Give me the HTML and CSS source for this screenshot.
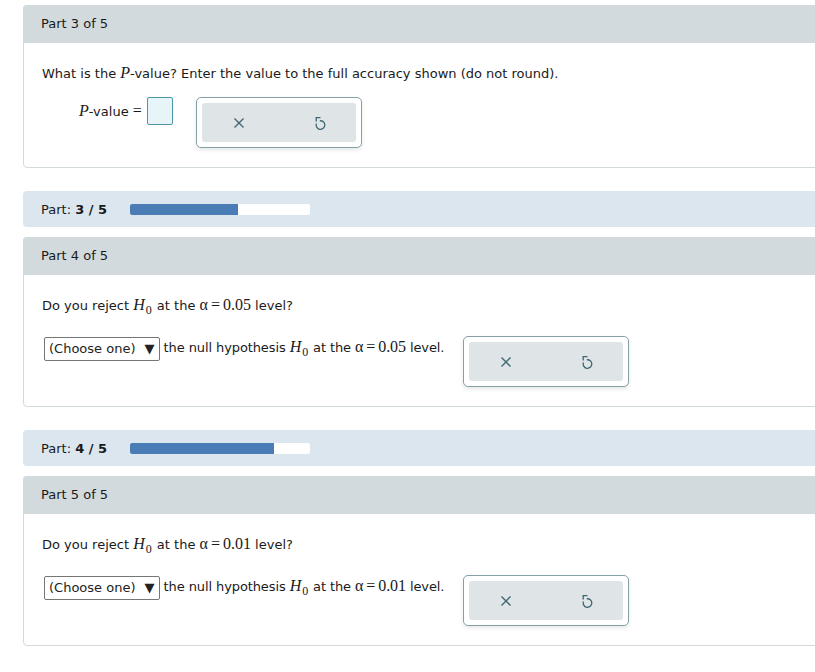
FILE: index.html
```html
<!DOCTYPE html>
<html>
<head>
<meta charset="utf-8">
<link rel="stylesheet" href="styles.css">
</head>
<body>
<div class="page">
  <section class="card">
    <div class="card-head">Part 3 of 5</div>
    <div class="card-body">
      <p class="question">What is the <span class="m i">P</span>-value? Enter the value to the full accuracy shown (do not round).</p>
      <div class="answer-row pv-row">
        <span class="pv-label"><span class="m i">P</span>-value<span class="m eq">=</span></span>
        <span class="input-box"></span>
        <div class="btn-group">
          <div class="btn-inner">
            <span class="icon"><svg width="12" height="12" viewBox="0 0 12 12"><path d="M1.5 1.5L10.5 10.5M10.5 1.5L1.5 10.5" stroke="#3f6672" stroke-width="1.4" fill="none"/></svg></span>
            <span class="icon"><svg width="12" height="14" viewBox="0 0 12 14"><path d="M6.5 1.6H2.2V5.6" stroke="#3f6672" stroke-width="1.3" fill="none"/><path d="M2.5 7.5A4.3 4.3 0 1 0 5.8 4.8" stroke="#3f6672" stroke-width="1.3" fill="none"/></svg></span>
          </div>
        </div>
      </div>
    </div>
  </section>

  <div class="progress">
    <span class="progress-label">Part: <b>3 / 5</b></span>
    <span class="bar"><span class="fill" style="width:60%"></span></span>
  </div>

  <section class="card">
    <div class="card-head">Part 4 of 5</div>
    <div class="card-body">
      <p class="question">Do you reject <span class="m i">H</span><sub class="m">0</sub> at the <span class="m">α</span><span class="m eq">=</span><span class="m">0.05</span> level?</p>
      <div class="answer-row">
        <span class="select">(Choose one) <span class="caret">▼</span></span>
        <span class="tail">the null hypothesis <span class="m i">H</span><sub class="m">0</sub> at the <span class="m">α</span><span class="m eq">=</span><span class="m">0.05</span> level.</span>
        <div class="btn-group">
          <div class="btn-inner">
            <span class="icon"><svg width="12" height="12" viewBox="0 0 12 12"><path d="M1.5 1.5L10.5 10.5M10.5 1.5L1.5 10.5" stroke="#3f6672" stroke-width="1.4" fill="none"/></svg></span>
            <span class="icon"><svg width="12" height="14" viewBox="0 0 12 14"><path d="M6.5 1.6H2.2V5.6" stroke="#3f6672" stroke-width="1.3" fill="none"/><path d="M2.5 7.5A4.3 4.3 0 1 0 5.8 4.8" stroke="#3f6672" stroke-width="1.3" fill="none"/></svg></span>
          </div>
        </div>
      </div>
    </div>
  </section>

  <div class="progress">
    <span class="progress-label">Part: <b>4 / 5</b></span>
    <span class="bar"><span class="fill" style="width:80%"></span></span>
  </div>

  <section class="card">
    <div class="card-head">Part 5 of 5</div>
    <div class="card-body">
      <p class="question">Do you reject <span class="m i">H</span><sub class="m">0</sub> at the <span class="m">α</span><span class="m eq">=</span><span class="m">0.01</span> level?</p>
      <div class="answer-row">
        <span class="select">(Choose one) <span class="caret">▼</span></span>
        <span class="tail">the null hypothesis <span class="m i">H</span><sub class="m">0</sub> at the <span class="m">α</span><span class="m eq">=</span><span class="m">0.01</span> level.</span>
        <div class="btn-group">
          <div class="btn-inner">
            <span class="icon"><svg width="12" height="12" viewBox="0 0 12 12"><path d="M1.5 1.5L10.5 10.5M10.5 1.5L1.5 10.5" stroke="#3f6672" stroke-width="1.4" fill="none"/></svg></span>
            <span class="icon"><svg width="12" height="14" viewBox="0 0 12 14"><path d="M6.5 1.6H2.2V5.6" stroke="#3f6672" stroke-width="1.3" fill="none"/><path d="M2.5 7.5A4.3 4.3 0 1 0 5.8 4.8" stroke="#3f6672" stroke-width="1.3" fill="none"/></svg></span>
          </div>
        </div>
      </div>
    </div>
  </section>
</div>
</body>
</html>
```

FILE: styles.css
```css
html, body {
  margin: 0;
  padding: 0;
  overflow: hidden;
  background: #fff;
}
body {
  font-family: "DejaVu Sans", Verdana, sans-serif;
  font-size: 13px;
  color: #1a1a1a;
}
.page {
  padding: 5px 0 0 23px;
  width: 820px;
}
.card {
  border: 1px solid #d3dadd;
  border-radius: 4px;
  background: #fff;
}
.card-head {
  background: #d2dadd;
  height: 38px;
  line-height: 38px;
  padding-left: 18px;
  margin: -1px -1px 0 -1px;
  border-radius: 4px 4px 0 0;
}
.card-body {
  padding: 20px 18px 19px 18px;
}
.question {
  margin: 0 0 20px 0;
  line-height: 20px;
}
.m {
  font-family: "Liberation Serif", "DejaVu Serif", serif;
  font-size: 16px;
}
.i { font-style: italic; }
.eq { margin: 0 3px; }
sub.m {
  font-size: 12px;
  vertical-align: -4px;
  line-height: 0;
  margin-left: 1px;
  margin-right: 1px;
}
.answer-row {
  display: flex;
  align-items: flex-start;
}
.pv-row { padding-left: 37px; margin-top: -7px; }
.pv-label {
  line-height: 22px;
  padding-top: 3px;
}
.pv-label .eq { margin: 0 2px 0 4px; }
.input-box {
  display: block;
  width: 24px;
  height: 26px;
  border: 1px solid #4e95a9;
  border-radius: 2px;
  background: #e7f5f9;
  margin: 0 23px 0 3px;
}
.btn-group {
  width: 166px;
  height: 51px;
  border: 1px solid #86a0a8;
  border-radius: 5px;
  background: #fff;
  padding: 5px;
  box-sizing: border-box;
  box-shadow: 0 2px 4px rgba(0,0,0,0.10);
  flex: none;
}
.btn-inner {
  height: 100%;
  background: #dfe5e7;
  border-radius: 3px;
  display: flex;
  align-items: center;
  justify-content: space-between;
  padding: 0 30px 0 31px;
}
.icon { display: flex; align-items: center; }
.select {
  display: inline-block;
  box-sizing: border-box;
  height: 24px;
  line-height: 22px;
  border: 1px solid #767676;
  border-radius: 2px;
  padding: 0 4px 0 4px;
  margin: 1px 0 0 2px;
  color: #222;
  flex: none;
}
.caret { font-size: 13px; margin-left: 5px; }
.tail {
  margin-left: 4px;
  line-height: 22px;
  margin-right: 19px;
  white-space: nowrap;
  letter-spacing: -0.1px;
}
.progress {
  margin: 23px 0 10px 0;
  height: 36px;
  background: #dbe6ef;
  border-radius: 4px;
  display: flex;
  align-items: center;
  padding-left: 18px;
}
.progress-label { width: 89px; }
.progress-label b { font-weight: bold; }
.bar {
  display: block;
  width: 180px;
  height: 11px;
  background: #fff;
  border-radius: 2px;
  overflow: hidden;
}
.fill {
  display: block;
  height: 100%;
  background: #4a7db6;
}
```
